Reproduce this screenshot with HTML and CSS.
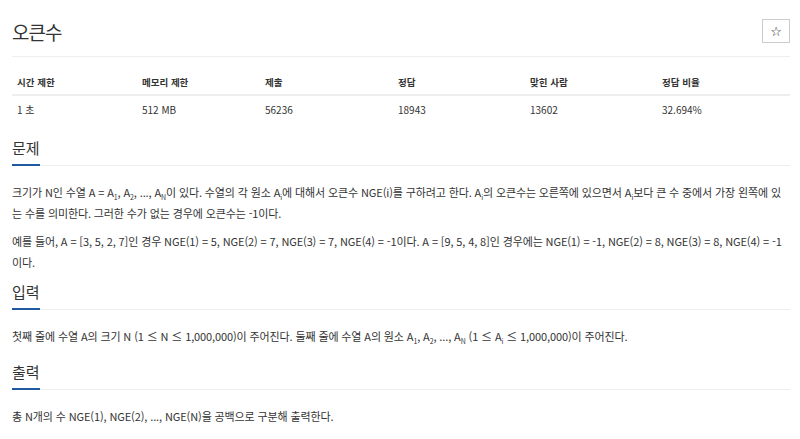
FILE: index.html
```html
<!DOCTYPE html>
<html lang="ko">
<head>
<meta charset="utf-8">
<title>오큰수</title>
<link rel="stylesheet" href="styles.css">
</head>
<body>
<div class="page">
  <div class="title-row">
    <h1 class="title">오큰수</h1>
    <button class="star" type="button">☆</button>
  </div>
  <div class="info">
    <div class="info-row head">
      <div>시간 제한</div><div>메모리 제한</div><div>제출</div><div>정답</div><div>맞힌 사람</div><div>정답 비율</div>
    </div>
    <div class="info-row">
      <div>1 초</div><div>512 MB</div><div>56236</div><div>18943</div><div>13602</div><div>32.694%</div>
    </div>
  </div>

  <section class="sec">
    <div class="headline"><h2>문제</h2></div>
    <p>크기가 N인 수열 A = A<sub>1</sub>, A<sub>2</sub>, ..., A<sub>N</sub>이 있다. 수열의 각 원소 A<sub>i</sub>에 대해서 오큰수 NGE(i)를 구하려고 한다. A<sub>i</sub>의 오큰수는 오른쪽에 있으면서 A<sub>i</sub>보다 큰 수 중에서 가장 왼쪽에 있는 수를 의미한다. 그러한 수가 없는 경우에 오큰수는 -1이다.</p>
    <p>예를 들어, A = [3, 5, 2, 7]인 경우 NGE(1) = 5, NGE(2) = 7, NGE(3) = 7, NGE(4) = -1이다. A = [9, 5, 4, 8]인 경우에는 NGE(1) = -1, NGE(2) = 8, NGE(3) = 8, NGE(4) = -1이다.</p>
  </section>

  <section class="sec">
    <div class="headline"><h2>입력</h2></div>
    <p>첫째 줄에 수열 A의 크기 N (1 ≤ N ≤ 1,000,000)이 주어진다. 둘째 줄에 수열 A의 원소 A<sub>1</sub>, A<sub>2</sub>, ..., A<sub>N</sub> (1 ≤ A<sub>i</sub> ≤ 1,000,000)이 주어진다.</p>
  </section>

  <section class="sec">
    <div class="headline"><h2>출력</h2></div>
    <p>총 N개의 수 NGE(1), NGE(2), ..., NGE(N)을 공백으로 구분해 출력한다.</p>
  </section>
</div>
</body>
</html>
```

FILE: styles.css
```css
html, body {
  margin: 0;
  padding: 0;
  background: #fff;
}
body {
  font-family: "Noto Sans CJK KR", "Noto Sans", sans-serif;
  color: #333;
  font-size: 11px;
}
.page {
  padding: 0 10px 0 12px;
}
.title-row {
  display: flex;
  justify-content: space-between;
  align-items: center;
  height: 57px;
  border-bottom: 1px solid #eee;
  box-sizing: border-box;
  padding-top: 6px;
}
.title {
  margin: 0;
  font-size: 19px;
  letter-spacing: -1px;
  font-weight: 400;
  line-height: 1;
}
.star {
  width: 28px;
  height: 24px;
  border: 1px solid #ccc;
  background: #fff;
  font-size: 13px;
  line-height: 1;
  padding: 0;
  color: #222;
  font-family: "DejaVu Sans", sans-serif;
}
.info {
  margin-top: 13px;
  margin-bottom: 14px;
}
.info-row {
  display: grid;
  grid-template-columns: 125px 123px 133px 132px 132px 1fr;
  height: 24px;
  align-items: center;
}
.info-row > div {
  padding-left: 5px;
  font-size: 10px;
}
.info-row.head {
  border-bottom: 2px solid #eee;
  font-weight: 700;
}
.info-row.head > div {
  font-size: 9.5px;
}
.info-row:not(.head) {
  height: 26px;
}
.sec {
  margin-top: 7px;
}
.sec:last-child {
  margin-top: 13px;
}
.headline {
  border-bottom: 1px solid #eee;
}
.headline h2 {
  display: inline-block;
  margin: 0 0 -1px;
  font-size: 15px;
  font-weight: 400;
  line-height: 24px;
  padding-bottom: 4px;
  border-bottom: 2px solid #1d5a9f;
}
.sec p {
  margin: 16px 0 0;
  line-height: 21px;
  letter-spacing: -0.12px;
}
.sec p + p {
  margin-top: 7px;
}
sub {
  font-size: 7px;
  line-height: 0;
}
```
